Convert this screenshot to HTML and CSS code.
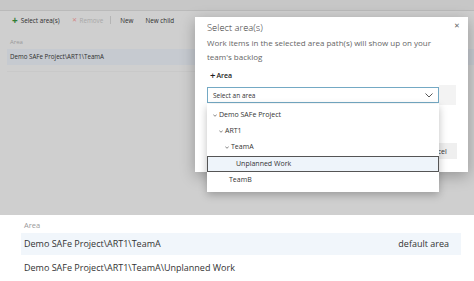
FILE: index.html
```html
<!DOCTYPE html>
<html lang="en">
<head>
    <meta charset="UTF-8">
    <title>Team areas</title>
    <link rel="stylesheet" href="styles.css">
</head>
<body>
    <section class="backdrop">
        <div class="topbar"></div>
        <div class="toolbar">
            <span class="tool"><span class="plus">+</span>Select area(s)</span>
            <span class="tool disabled"><span class="cross">&#10005;</span>Remove</span>
            <span class="sep"></span>
            <span class="tool">New</span>
            <span class="tool">New child</span>
        </div>
        <div class="bg-label">Area</div>
        <div class="bg-row">Demo SAFe Project\ART1\TeamA</div>
        <div class="bg-line"></div>

        <div class="dialog">
            <span class="close">&#10005;</span>
            <h2 class="dialog-title">Select area(s)</h2>
            <p class="dialog-text">Work items in the selected area path(s) will show up on your team's backlog</p>
            <div class="add-area"><span class="add-plus">+</span>Area</div>
            <div class="picker-row">
                <div class="picker">
                    <span>Select an area</span>
                    <svg class="chev" width="8" height="5" viewBox="0 0 8 5"><path d="M0.5 0.5 L4 4 L7.5 0.5" fill="none" stroke="#444" stroke-width="0.9"/></svg>
                </div>
                <div class="row-btn"></div>
            </div>
            <div class="footer">
                <button class="btn">Save</button>
                <button class="btn">Cancel</button>
            </div>

            <ul class="tree">
                <li class="lvl0"><svg class="twisty" width="4" height="3" viewBox="0 0 4 3"><path d="M0.3 0.5 L2 2.3 L3.7 0.5" fill="none" stroke="#555" stroke-width="0.7"/></svg>Demo SAFe Project</li>
                <li class="lvl1"><svg class="twisty" width="4" height="3" viewBox="0 0 4 3"><path d="M0.3 0.5 L2 2.3 L3.7 0.5" fill="none" stroke="#555" stroke-width="0.7"/></svg>ART1</li>
                <li class="lvl2"><svg class="twisty" width="4" height="3" viewBox="0 0 4 3"><path d="M0.3 0.5 L2 2.3 L3.7 0.5" fill="none" stroke="#555" stroke-width="0.7"/></svg>TeamA</li>
                <li class="lvl3 selected">Unplanned Work</li>
                <li class="lvl2 leaf">TeamB</li>
            </ul>
        </div>
    </section>

    <section class="result">
        <div class="result-label">Area</div>
        <div class="result-row current">
            <span>Demo SAFe Project\ART1\TeamA</span>
            <span>default area</span>
        </div>
        <div class="result-row">
            <span>Demo SAFe Project\ART1\TeamA\Unplanned Work</span>
        </div>
    </section>
</body>
</html>
```

FILE: styles.css
```css
* {
    margin: 0;
    padding: 0;
    box-sizing: border-box;
}

body {
    font-family: "Open Sans", "Noto Sans", sans-serif;
    background: #fff;
    color: #333;
    width: 474px;
    height: 281px;
    overflow: hidden;
}

.backdrop {
    position: relative;
    height: 215px;
    background: #cfcfcf;
}

.topbar {
    height: 11px;
    background: #c7c7c7;
    border-bottom: 1px solid #bababa;
}

.toolbar {
    display: flex;
    align-items: center;
    height: 18px;
    padding-left: 12px;
    font-size: 6.3px;
    color: #2e2e2e;
}

.tool {
    display: flex;
    align-items: center;
    margin-right: 12px;
}

.plus {
    color: #2f7d32;
    font-size: 10px;
    font-weight: bold;
    margin-right: 3px;
    line-height: 1;
}

.cross {
    color: #d48585;
    font-size: 6px;
    margin-right: 3px;
}

.tool.disabled {
    color: #a8a8a8;
    margin-right: 7px;
}

.sep {
    width: 1px;
    height: 8px;
    background: #b5b5b5;
    margin-right: 9px;
}

.bg-label {
    margin-top: 9px;
    padding-left: 10px;
    font-size: 6px;
    color: #9a9a9a;
}

.bg-row {
    margin: 3px 0 0 7px;
    height: 16px;
    line-height: 16px;
    padding-left: 3px;
    background: #c6cad0;
    font-size: 6.2px;
    color: #2e2e2e;
}

.bg-line {
    margin: 6px 10px 0 7px;
    height: 1px;
    background: #c9c9c9;
}

.dialog {
    position: absolute;
    left: 195px;
    top: 17px;
    width: 273px;
    height: 155px;
    background: #fff;
    box-shadow: 0 4px 14px rgba(0, 0, 0, 0.28);
    padding: 4px 12px 0 12px;
}

.close {
    position: absolute;
    right: 8px;
    top: 4px;
    font-size: 7px;
    color: #666;
}

.dialog-title {
    font-size: 9.4px;
    font-weight: 300;
    color: #333;
    line-height: 14px;
}

.dialog-text {
    margin-top: 1px;
    font-size: 8px;
    line-height: 14px;
    color: #666;
    width: 240px;
}

.add-area {
    margin-top: 4px;
    display: flex;
    align-items: center;
    height: 14px;
    padding-left: 3px;
    font-size: 7px;
    font-weight: 600;
    color: #222;
}

.add-plus {
    font-size: 9.5px;
    font-weight: 600;
    margin-right: 1px;
}

.picker-row {
    display: flex;
    align-items: center;
    margin-top: 3px;
}

.picker {
    width: 232px;
    height: 16px;
    border: 1px solid #74a9c4;
    display: flex;
    align-items: center;
    justify-content: space-between;
    padding: 0 5px 0 5px;
    font-size: 6.5px;
    color: #333;
}

.row-btn {
    width: 17px;
    height: 20px;
    background: #f3f3f3;
}

.footer {
    display: flex;
    justify-content: flex-end;
    gap: 6px;
    margin-top: 38px;
    margin-right: -1px;
}

.btn {
    font-family: inherit;
    font-size: 7px;
    color: #333;
    background: #efefef;
    border: none;
    height: 16px;
    width: 42px;
}

.tree {
    position: absolute;
    left: 12px;
    top: 87px;
    width: 232px;
    list-style: none;
    background: #fff;
    box-shadow: 0 3px 8px rgba(0, 0, 0, 0.25);
    padding: 3px 0 4px 0;
    font-size: 7px;
    color: #333;
}

.tree li {
    height: 16px;
    line-height: 16px;
    display: flex;
    align-items: center;
}

.twisty {
    margin-right: 2px;
}

.lvl0 { padding-left: 6px; }
.lvl1 { padding-left: 12px; }
.lvl2 { padding-left: 18px; }
.lvl3 { padding-left: 28px; }
.leaf { padding-left: 22px; }

.tree .selected {
    background: #eef4fa;
    border: 1px solid #555;
    margin-top: 1px;
}

.result {
    padding: 5px 13px 0 21px;
}

.result-label {
    padding-left: 3px;
    font-size: 7.5px;
    color: #9a9a9a;
    line-height: 10px;
}

.result-row {
    display: flex;
    justify-content: space-between;
    height: 22px;
    line-height: 22px;
    padding: 0 12px 0 3px;
    font-size: 9px;
    color: #333;
    margin-top: 2px;
}

.result-row.current {
    margin-top: 3px;
    background: #f1f6fb;
}
```
